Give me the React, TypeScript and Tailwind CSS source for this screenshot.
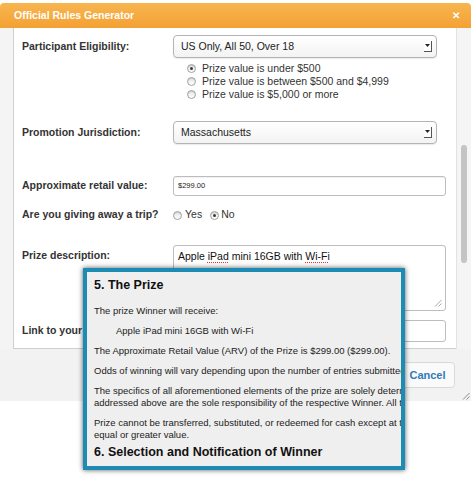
import React from "react";

function Radio({ checked = false }: { checked?: boolean }) {
  return (
    <span className="w-[9px] h-[9px] shrink-0 rounded-full border border-[#a0a0a0] bg-linear-to-b from-[#e4e4e4] to-white shadow-[inset_0_1px_1px_rgba(0,0,0,0.12)] flex items-center justify-center">
      {checked && <span className="w-[3px] h-[3px] rounded-full bg-[#3a3a3a]" />}
    </span>
  );
}

function Select({ value, top }: { value: string; top: string }) {
  return (
    <div
      className={`${top} w-[264px] h-[23px] rounded-[4px] border border-[#b4b4b4] bg-linear-to-b from-white to-[#f3f3f3] shadow-[0_1px_1px_rgba(0,0,0,0.08)] flex items-center justify-between pl-[7px] pr-[4px] text-[10.5px] text-[#222]`}
    >
      <span>{value}</span>
      <span className="w-[8px] h-[11px] bg-white border-r border-b border-[#555] flex justify-center pt-[3px]">
        <svg width="5" height="3" viewBox="0 0 5 3">
          <path d="M0 0h5L2.5 3z" fill="#222" />
        </svg>
      </span>
    </div>
  );
}

function Grip({ color = "#9a9a9a" }: { color?: string }) {
  return (
    <svg width="8" height="8" viewBox="0 0 8 8">
      <path d="M7.5 1L1 7.5M7.5 4.5L4.5 7.5" stroke={color} strokeWidth="1" />
    </svg>
  );
}

export default function App() {
  return (
    <div className="w-[474px] h-[479px] bg-white relative overflow-hidden font-['Liberation_Sans',Arial,sans-serif] text-[#333]">
      <div className="pt-[3px] w-[471px]">
        {/* title bar */}
        <div className="h-[25px] rounded-t-[4px] bg-linear-to-b from-[#f8b54f] to-[#f3a133] flex items-center justify-between pl-[14px] pr-[11px]">
          <span className="text-white font-bold text-[10.5px]">Official Rules Generator</span>
          <span className="text-white font-bold text-[10px] leading-none">✕</span>
        </div>

        {/* body */}
        <div className="flex h-[321px]">
          <div className="w-[13px] bg-[#f4f4f4]" />
          <div className="flex-1 bg-white border-l border-b border-[#cfcfcf] pl-[8px] pt-[7px] flex flex-col">
            <div className="flex items-center h-[23px]">
              <span className="w-[151px] font-bold text-[10.5px]">Participant Eligibility:</span>
              <Select value="US Only, All 50, Over 18" top="" />
            </div>
            <div className="mt-[4px] pl-[165px] flex flex-col text-[10.5px]">
              <label className="h-[13px] flex items-center gap-[6px]">
                <Radio checked />
                <span>Prize value is under $500</span>
              </label>
              <label className="h-[13px] flex items-center gap-[6px]">
                <Radio />
                <span>Prize value is between $500 and $4,999</span>
              </label>
              <label className="h-[13px] flex items-center gap-[6px]">
                <Radio />
                <span>Prize value is $5,000 or more</span>
              </label>
            </div>

            <div className="flex items-center h-[23px] mt-[20px]">
              <span className="w-[151px] font-bold text-[10.5px]">Promotion Jurisdiction:</span>
              <Select value="Massachusetts" top="" />
            </div>

            <div className="flex items-center h-[20px] mt-[32px]">
              <span className="w-[151px] font-bold text-[10.5px]">Approximate retail value:</span>
              <div className="w-[273px] h-[20px] rounded-[3px] border border-[#bdbdbd] shadow-[inset_0_1px_1px_rgba(0,0,0,0.06)] flex items-center pl-[4px] text-[7.5px] text-[#222]">
                $299.00
              </div>
            </div>

            <div className="flex items-center h-[16px] mt-[11px]">
              <span className="w-[151px] font-bold text-[10.5px]">Are you giving away a trip?</span>
              <div className="flex items-center text-[10.5px]">
                <Radio />
                <span className="ml-[3px]">Yes</span>
                <span className="ml-[8px]" />
                <Radio checked />
                <span className="ml-[2px]">No</span>
              </div>
            </div>

            <div className="flex items-start mt-[22px]">
              <span className="w-[151px] font-bold text-[10.5px] pt-[3px]">Prize description:</span>
              <div className="w-[273px] h-[66px] rounded-[3px] border border-[#bdbdbd] relative pl-[4px] pt-[3px] text-[10.5px] text-[#111]">
                Apple{" "}
                <span className="underline decoration-dotted decoration-[#e33] underline-offset-2">iPad</span>{" "}
                mini 16GB with{" "}
                <span className="underline decoration-dotted decoration-[#e33] underline-offset-2">Wi-Fi</span>
                <span className="absolute right-[3px] bottom-[3px] flex">
                  <Grip color="#a8a8a8" />
                </span>
              </div>
            </div>

            <div className="flex items-center h-[22px] mt-[9px]">
              <span className="w-[151px] font-bold text-[10.5px]">Link to your website:</span>
              <div className="w-[273px] h-[22px] rounded-[3px] border border-[#bdbdbd]" />
            </div>
          </div>
          <div className="w-[15px] bg-[#f5f5f5] border-l border-[#e2e2e2] pt-[117px] flex justify-center">
            <div className="w-[6px] h-[118px] rounded-full bg-[#c4c4c4]" />
          </div>
        </div>

        {/* button pane */}
        <div className="h-[52px] bg-[#f2f2f2] flex items-center justify-end pr-[16px] relative">
          <button className="w-[55px] h-[26px] rounded-[4px] border border-[#d9d9d9] bg-[#fafafa] text-[11px] font-bold text-[#2f7bb5]">
            Cancel
          </button>
          <span className="absolute right-[1px] bottom-[1px] flex">
            <Grip color="#8a8a8a" />
          </span>
        </div>
      </div>

      {/* callout preview */}
      <div className="absolute left-[83px] top-[268px] w-[322px] h-[202px] border-[4px] border-[#1d8cb5] bg-[#efefef] overflow-hidden shadow-[0_0_5px_rgba(0,0,0,0.65)]">
        <div className="w-[560px] pl-[7px] pt-[5px] text-[9.5px] leading-[12px] text-[#222]">
          <h3 className="text-[12.5px] font-bold leading-[16px] mb-[12px] text-[#111]">5. The Prize</h3>
          <p className="mb-[8px]">The prize Winner will receive:</p>
          <p className="mb-[8px] pl-[22px]">Apple iPad mini 16GB with Wi-Fi</p>
          <p className="mb-[8px]">The Approximate Retail Value (ARV) of the Prize is $299.00 ($299.00).</p>
          <p className="mb-[8px] whitespace-nowrap">
            Odds of winning will vary depending upon the number of entries submitted by eligible entrants.
          </p>
          <p className="mb-[8px] whitespace-nowrap">
            The specifics of all aforementioned elements of the prize are solely determined by Sponsor. Any costs not
            <br />
            addressed above are the sole responsibility of the respective Winner. All taxes are the Winner's.
          </p>
          <p className="mb-[3px] whitespace-nowrap">
            Prize cannot be transferred, substituted, or redeemed for cash except at the Sponsor's discretion for a prize of
            <br />
            equal or greater value.
          </p>
          <h3 className="text-[12.5px] font-bold leading-[16px] text-[#111]">6. Selection and Notification of Winner</h3>
        </div>
      </div>
    </div>
  );
}
